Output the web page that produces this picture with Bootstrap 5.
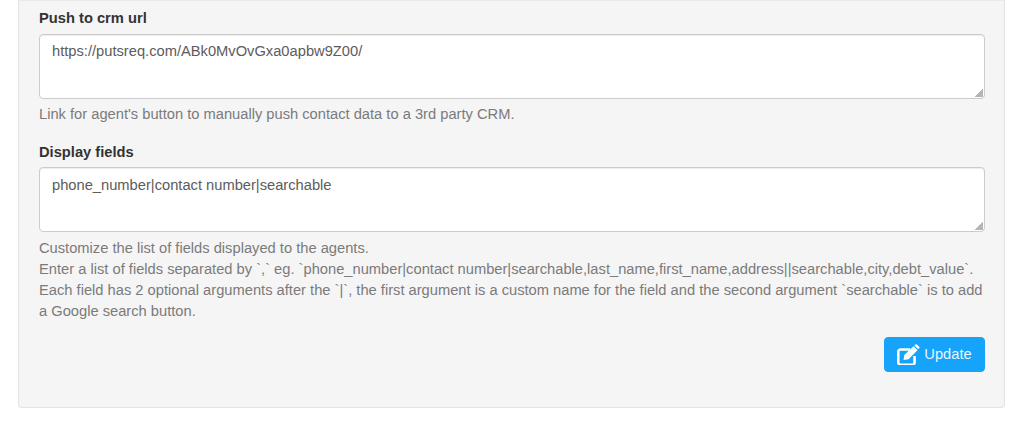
<!DOCTYPE html>
<html lang="en">
<head>
<meta charset="utf-8">
<title>Settings</title>
<link href="https://cdn.jsdelivr.net/npm/bootstrap@5.3.0/dist/css/bootstrap.min.css" rel="stylesheet">
<style>
html, body { height: 430px; overflow: hidden; }
body { background: #fff; color: #333; font-family: "Liberation Sans", Arial, sans-serif; font-size: 14.7px; line-height: 21px; }
.page-wrap { padding: 0 19px 0 18px; }
.well-box { background: #f5f5f5; border: 1px solid #e3e3e3; border-top: 0; border-radius: 0 0 4px 4px; box-shadow: inset 0 1px 1px rgba(0,0,0,.05); padding: 7.75px 19px 35px 20px; }
.field-label { font-weight: 700; color: #333; margin-bottom: 4.75px; display: block; line-height: 21px; }
.field-group:first-child .field-label { margin-bottom: 5.25px; }
.field-input { display: block; width: 100%; height: 65px; padding: 6.3px 12.6px 6.3px 12px; font-size: 14.7px; line-height: 21px; color: #5c5c5c; background: #fff; border: 1px solid #ccc; border-radius: 4px; box-shadow: inset 0 1px 1px rgba(0,0,0,.075); font-family: inherit; resize: vertical; }
.field-input:focus { outline: 0; }
.field-input::-webkit-resizer { background: linear-gradient(135deg, transparent 50%, #b5b5b5 50%) no-repeat right 1px bottom 1px / 8px 8px; }
.field-group { margin-bottom: 16.25px; }
.field-group:nth-child(2) { margin-bottom: 15.25px; }
.field-help { color: #7b7b7b; margin-top: 5.25px; line-height: 21px; }
.update-btn { background: #15a4fa; border: 1px solid #15a4fa; color: #fff; font-size: 14.7px; line-height: 21px; height: 35px; width: 101px; padding: 0; border-radius: 4px; }
.update-btn:hover { background: #15a4fa; color: #fff; border-color: #15a4fa; }
.update-btn span { color: #e8f6ff; }
.update-btn svg { width: 23px; height: 21px; flex: none; }
</style>
</head>
<body>
<div class="page-wrap">
  <form class="well-box">
    <div class="field-group">
      <label class="field-label" for="crm">Push to crm url</label>
      <textarea class="field-input" id="crm">https://putsreq.com/ABk0MvOvGxa0apbw9Z00/</textarea>
      <div class="field-help">Link for agent's button to manually push contact data to a 3rd party CRM.</div>
    </div>
    <div class="field-group">
      <label class="field-label" for="fields">Display fields</label>
      <textarea class="field-input" id="fields">phone_number|contact number|searchable</textarea>
      <div class="field-help">Customize the list of fields displayed to the agents.<br>Enter a list of fields separated by `,` eg. `phone_number|contact number|searchable,last_name,first_name,address||searchable,city,debt_value`.<br>Each field has 2 optional arguments after the `|`, the first argument is a custom name for the field and the second argument `searchable` is to add a Google search button.</div>
    </div>
    <div class="d-flex justify-content-end">
      <button type="button" class="btn update-btn d-inline-flex align-items-center justify-content-center gap-1">
        <svg viewBox="0 -1 22 20" aria-hidden="true">
          <path d="M12.500 4.200H3.400a2.200 2.200 0 0 0-2.200 2.200v10.200a2.200 2.200 0 0 0 2.200 2.200h11.200a2.200 2.200 0 0 0 2.200-2.200V10.500" fill="none" stroke="#fff" stroke-width="2.500"/>
          <path d="M6.200 14.300l.8-4.800 8.800-8.300 3.800 3.800-8.600 8.500z" fill="#fff"/>
          <path d="M16.600.400l1-.9a1 1 0 0 1 1.400 0l2.200 2.200a1 1 0 0 1 0 1.400l-1 .9z" fill="#fff"/>
        </svg>
        <span>Update</span>
      </button>
    </div>
  </form>
</div>
<script src="https://cdn.jsdelivr.net/npm/bootstrap@5.3.0/dist/js/bootstrap.bundle.min.js"></script>
</body>
</html>
